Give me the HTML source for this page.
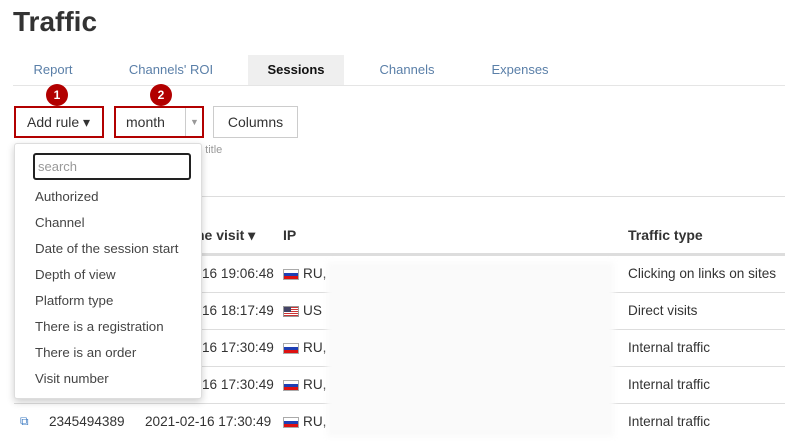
<!DOCTYPE html><html><head><style>
body{margin:0;width:785px;height:437px;overflow:hidden;background:#fff;font-family:"Liberation Sans",sans-serif;color:#333;position:relative}
.a{position:absolute}
.tab{position:absolute;top:55px;height:30px;line-height:30px;font-size:13px;color:#5a7fa8;text-align:center}
.badge{position:absolute;width:22px;height:22px;border-radius:50%;background:#b20000;color:#fff;font-size:12px;font-weight:bold;text-align:center;line-height:22px}
.btn{position:absolute;top:106px;height:32px;border:1px solid #ccc;box-sizing:border-box;font-size:14px;line-height:30px}
.row{position:absolute;left:14px;width:771px;border-top:1px solid #ddd;height:37px;font-size:13.6px}
.row span{position:absolute;top:10px}
.flag{position:absolute;top:13px;width:16px;height:11px}
.ru{background:linear-gradient(#fff 0 33%,#1d3fb5 33% 66%,#d11 66%);border:1px solid #aaa;box-sizing:border-box}
.us{background:repeating-linear-gradient(#c33 0 1px,#fff 1px 2px);border:1px solid #999;box-sizing:border-box}
.us:before{content:"";position:absolute;left:0;top:0;width:7px;height:5px;background:#446}
.menu{position:absolute;left:14px;top:143px;width:186px;height:254px;background:#fff;border:1px solid #ddd;border-radius:3px;box-shadow:0 3px 8px rgba(0,0,0,.2)}
.menu div.i{position:absolute;left:20px;font-size:13.3px;color:#444}
</style></head><body>
<div class="a" style="left:13px;top:6px;font-size:28px;font-weight:bold;color:#333">Traffic</div>
<div class="a" style="left:13px;top:85px;width:772px;height:1px;background:#e5e5e5"></div>
<div class="tab" style="left:13px;width:80px">Report</div>
<div class="tab" style="left:112px;width:118px">Channels' ROI</div>
<div class="tab" style="left:248px;width:96px;background:#efefef;color:#111;font-weight:bold">Sessions</div>
<div class="tab" style="left:364px;width:86px">Channels</div>
<div class="tab" style="left:475px;width:90px">Expenses</div>
<div class="badge" style="left:46px;top:84px">1</div>
<div class="badge" style="left:150px;top:84px">2</div>
<div class="btn" style="left:14px;width:90px;border:2px solid #b20000;padding-left:11px;line-height:28px">Add rule ▾</div>
<div class="btn" style="left:114px;width:90px;border:2px solid #b20000;line-height:28px"><span style="padding-left:10px">month</span><span class="a" style="left:69px;top:0;width:1px;height:28px;background:#ccc"></span><span class="a" style="left:74px;top:0;font-size:9px;color:#999">▼</span></div>
<div class="btn" style="left:213px;width:85px;text-align:center">Columns</div>
<div class="a" style="left:196px;top:144px;font-size:11px;color:#999">n title</div>
<div class="a" style="left:14px;top:196px;width:771px;height:1px;background:#ddd"></div>
<div class="a" style="left:196px;top:227px;font-size:14px;font-weight:bold">he visit ▾</div>
<div class="a" style="left:283px;top:227px;font-size:14px;font-weight:bold">IP</div>
<div class="a" style="left:628px;top:227px;font-size:14px;font-weight:bold">Traffic type</div>
<div class="a" style="left:14px;top:253px;width:771px;height:2px;background:#ddd"></div>
<div class="row" style="top:255px"><span style="left:188px">16 19:06:48</span><div class="flag ru" style="left:269px"></div><span style="left:289px">RU,</span><span style="left:614px">Clicking on links on sites</span></div>
<div class="row" style="top:292px"><span style="left:188px">16 18:17:49</span><div class="flag us" style="left:269px"></div><span style="left:289px">US</span><span style="left:614px">Direct visits</span></div>
<div class="row" style="top:329px"><span style="left:188px">16 17:30:49</span><div class="flag ru" style="left:269px"></div><span style="left:289px">RU,</span><span style="left:614px">Internal traffic</span></div>
<div class="row" style="top:366px"><span style="left:188px">16 17:30:49</span><div class="flag ru" style="left:269px"></div><span style="left:289px">RU,</span><span style="left:614px">Internal traffic</span></div>
<div class="row" style="top:403px"><span style="left:6px;color:#3a78c0;font-size:12px">⧉</span><span style="left:35px">2345494389</span><span style="left:131px">2021-02-16 17:30:49</span><div class="flag ru" style="left:269px"></div><span style="left:289px">RU,</span><span style="left:614px">Internal traffic</span></div>
<div class="a" style="left:327px;top:262px;width:287px;height:175px;background:#fafafa;filter:blur(3px)"></div>
<div class="menu">
<div class="a" style="left:18px;top:9px;height:23px;border:2px solid #222;border-radius:3px;font-size:13px;color:#999;line-height:23px;padding-left:3px;width:151px">search</div>
<div class="i" style="top:45px">Authorized</div>
<div class="i" style="top:71px">Channel</div>
<div class="i" style="top:97px">Date of the session start</div>
<div class="i" style="top:123px">Depth of view</div>
<div class="i" style="top:149px">Platform type</div>
<div class="i" style="top:175px">There is a registration</div>
<div class="i" style="top:201px">There is an order</div>
<div class="i" style="top:227px">Visit number</div>
</div>
</body></html>
